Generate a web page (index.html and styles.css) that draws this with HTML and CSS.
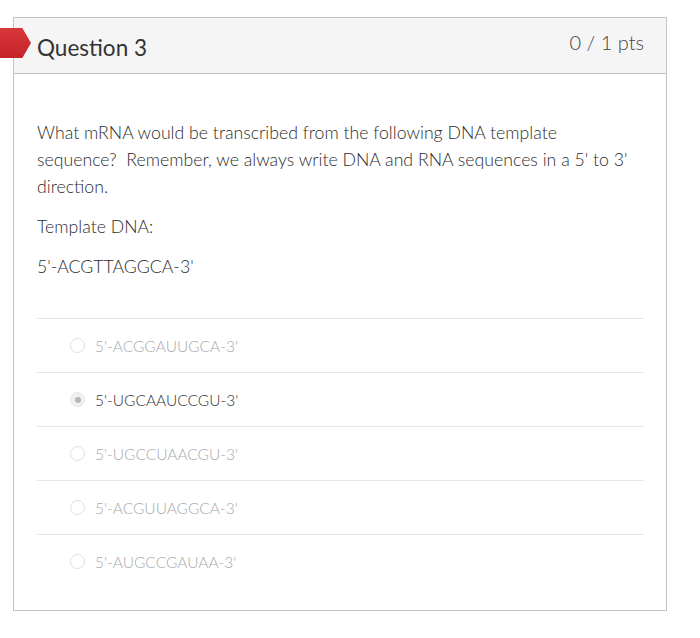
FILE: index.html
```html
<!DOCTYPE html>
<html>
<head>
<meta charset="utf-8">
<link rel="stylesheet" href="styles.css">
</head>
<body>
<div class="page">
  <div class="card">
    <div class="flag"></div>
    <div class="header">
      <div class="title">Question 3</div>
      <div class="pts">0 / 1 pts</div>
    </div>
    <div class="body">
      <div class="text">
        <p>What mRNA would be transcribed from the following DNA template sequence?&nbsp; Remember, we always write DNA and RNA sequences in a 5' to 3' direction.</p>
        <p>Template DNA:</p>
        <p>5'-ACGTTAGGCA-3'</p>
      </div>
      <div class="answers">
        <div class="answer"><span class="radio"></span><span class="label">5'-ACGGAUUGCA-3'</span></div>
        <div class="answer selected"><span class="radio"></span><span class="label">5'-UGCAAUCCGU-3'</span></div>
        <div class="answer"><span class="radio"></span><span class="label">5'-UGCCUAACGU-3'</span></div>
        <div class="answer"><span class="radio"></span><span class="label">5'-ACGUUAGGCA-3'</span></div>
        <div class="answer"><span class="radio"></span><span class="label">5'-AUGCCGAUAA-3'</span></div>
      </div>
    </div>
  </div>
</div>
</body>
</html>
```

FILE: styles.css
```css
* { box-sizing: border-box; }
html, body { margin: 0; padding: 0; background: #fff; }
body { font-family: Lato, "Open Sans", sans-serif; color: #333; }
.page { padding: 17px 0 0 13px; }
.card {
  position: relative;
  width: 654px;
  height: 594px;
  border: 1px solid #c4c4c4;
  background: #fff;
}
.flag {
  position: absolute;
  left: -14px;
  top: 10px;
  width: 31px;
  height: 30px;
  background: linear-gradient(#d8383b, #c4232a);
  clip-path: polygon(0 0, 72% 0, 100% 50%, 72% 100%, 0 100%);
}
.header {
  display: flex;
  justify-content: space-between;
  align-items: flex-start;
  height: 56px;
  background: #f5f5f5;
  border-bottom: 1px solid #c4c4c4;
  padding: 0 22px 0 23px;
}
.title {
  font-size: 22.5px;
  color: #333;
  margin-top: 17px;
  line-height: 26px;
}
.pts {
  font-size: 20px;
  font-weight: 300;
  color: #444;
  margin-top: 12px;
  line-height: 24px;
}
.body { padding: 45px 22px 0 23px; }
.text { padding-right: 10px; }
.text p {
  margin: 0 0 13px;
  font-size: 17.7px;
  font-weight: 300;
  line-height: 27px;
  color: #2d2d2d;
}
.text p:last-child { margin-bottom: 0; }
.answers { margin-top: 38px; }
.answer {
  display: flex;
  align-items: center;
  height: 54px;
  border-top: 1px solid #e6e6e6;
  padding-left: 33px;
}
.radio {
  width: 15px;
  height: 15px;
  border-radius: 50%;
  border: 1px solid #e0e0e0;
  background: #fff;
  margin-right: 10px;
  display: flex;
  align-items: center;
  justify-content: center;
}
.answer.selected .radio { border-color: #e8e8e8; background: #f0f0f0; }
.answer.selected .radio::after {
  content: "";
  width: 6px;
  height: 6px;
  border-radius: 50%;
  background: #b5b5b5;
}
.label {
  font-size: 15.5px;
  font-weight: 300;
  color: #aaa;
}
.answer.selected .label { color: #333; }
```
